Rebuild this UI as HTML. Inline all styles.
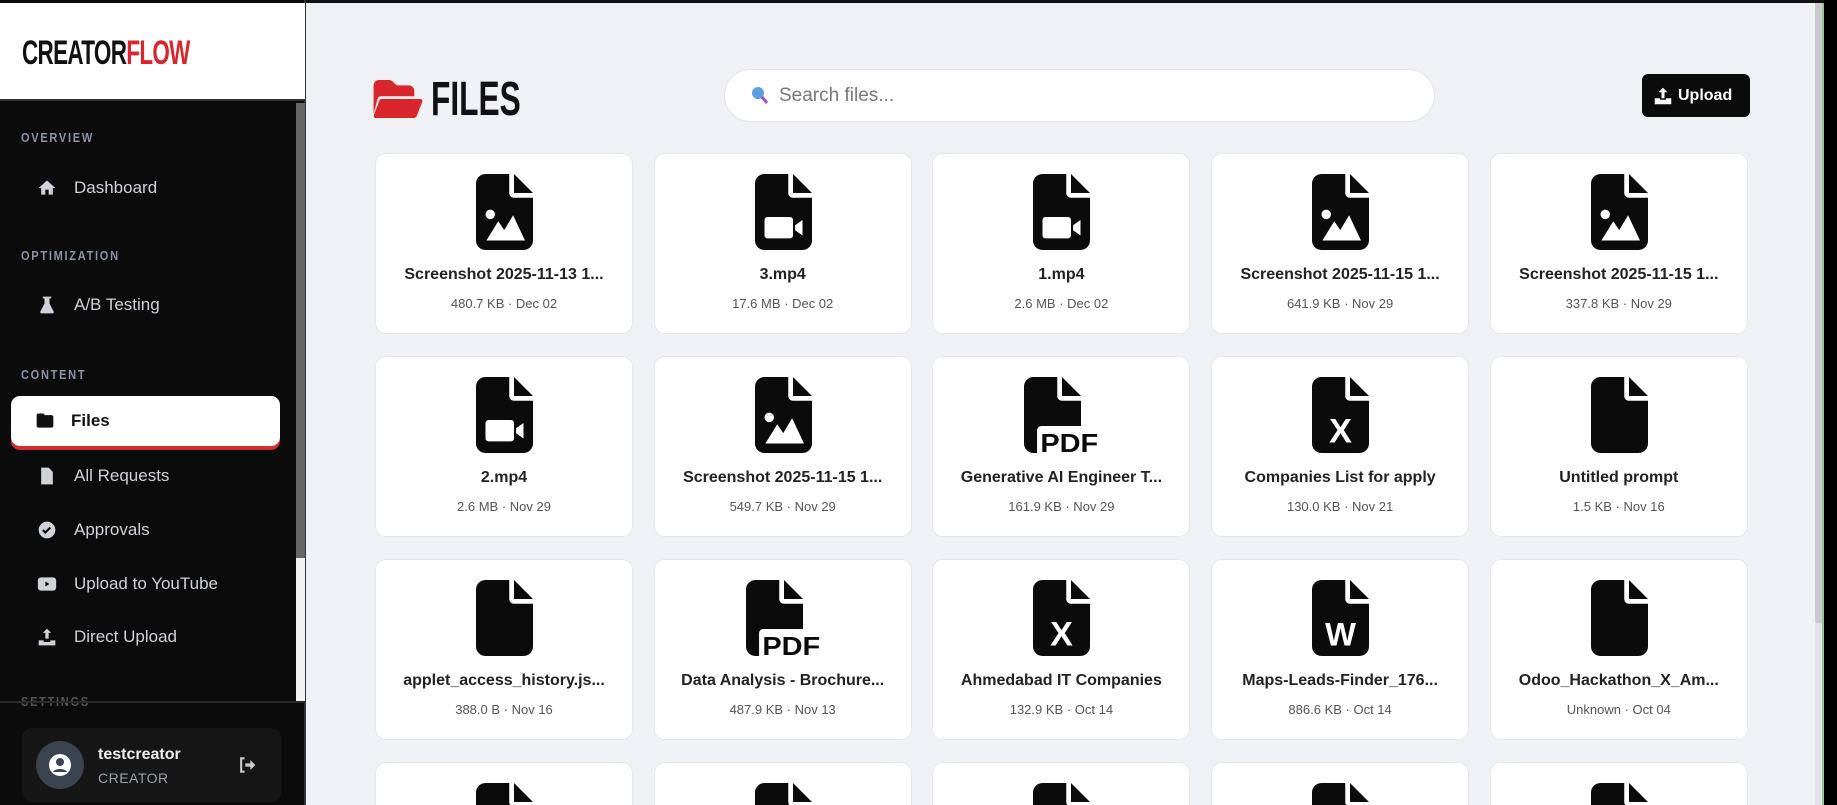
<!DOCTYPE html>
<html><head><meta charset="utf-8"><style>
*{margin:0;padding:0;box-sizing:border-box}
html,body{width:1837px;height:805px;overflow:hidden}
body{background:#f0f1f4;font-family:"Liberation Sans",sans-serif;position:relative}
#wrap{position:absolute;left:0;top:0;width:1837px;height:805px;overflow:hidden}
.topbar{position:absolute;left:0;top:0;width:1837px;height:3px;background:#111}
.side{position:absolute;left:0;top:0;width:306px;height:805px;background:#0b0b0b;border-right:2px solid #333;z-index:2}
.logo{position:absolute;left:0;top:3px;width:305px;height:98px;background:#fff;border-bottom:2px solid #333}
.logo span{position:absolute;left:22px;top:31px;font-weight:bold;font-size:34px;letter-spacing:-1px;transform:scaleX(.66);transform-origin:left;color:#111;font-family:"Liberation Sans Narrow","Liberation Sans",sans-serif;white-space:nowrap}
.logo b{color:#d9262c}
.sec{position:absolute;left:21px;font-size:13px;font-weight:bold;color:#8a93a8;letter-spacing:2px;transform:scaleX(.85);transform-origin:left}
.item{position:absolute;left:37px;font-size:17px;color:#cfd2d8;display:flex;align-items:center}
.item svg{width:20px;height:20px;margin-right:17px;fill:#cfd2d8}
.active{position:absolute;left:11px;top:396px;width:269px;height:50px;background:#fff;border-radius:9px;box-shadow:0 4px 0 #d32f2f;display:flex;align-items:center;padding-left:24px;font-weight:bold;font-size:17px;color:#111}
.active svg{width:20px;height:20px;fill:#111;margin-right:16px}
.sb{position:absolute;left:296px;top:103px;width:9px;height:598px;background:#f2f2f2}
.sb i{position:absolute;left:0;top:0;width:9px;height:455px;background:#666}
.div{position:absolute;left:0;top:701px;width:306px;height:2px;background:#2a2a2a}
.user{position:absolute;left:22px;top:728px;width:259px;height:74px;background:#161616;border-radius:10px}
.av{position:absolute;left:14px;top:13px;width:48px;height:48px;border-radius:50%;background:#3b4350}
.card{position:absolute;width:258px;height:181px;background:#fff;border-radius:11px;border:1px solid #e6e7ea;text-align:center;overflow:hidden}
.card.last{height:43px;border-bottom:none;border-radius:11px 11px 0 0}
.card svg.ic{position:absolute;top:20px;left:100px;width:57px;height:76px}
.card svg.pdf{left:91px;width:76px}
.nm{position:absolute;top:112px;left:0;width:100%;font-size:16px;font-weight:bold;color:#222}
.mt{position:absolute;top:142px;left:0;width:100%;font-size:13px;color:#555}
</style></head><body>
<svg width="0" height="0" style="position:absolute">
<defs>
<path id="doc" d="M0 64C0 28.7 28.7 0 64 0H224V128c0 17.7 14.3 32 32 32H384V448c0 35.3-28.7 64-64 64H64c-35.3 0-64-28.7-64-64V64zm384 64H256V0L384 128z"/>
</defs></svg>
<div id="wrap">
<div class="topbar"></div>
<div class="side">
<div class="logo"><span>CREATOR<b>FLOW</b></span></div>
<div class="sec" style="top:130px">OVERVIEW</div>
<div class="item" style="top:178px"><svg viewBox="0 0 24 24"><path d="M12 3L2 12h3v8h5v-6h4v6h5v-8h3z"/></svg>Dashboard</div>
<div class="sec" style="top:248px">OPTIMIZATION</div>
<div class="item" style="top:295px"><svg viewBox="0 0 24 24"><path d="M7 2h10v2h-2v6l5 10c.5 1-.2 2-1.3 2H5.3C4.2 22 3.5 21 4 20l5-10V4H7z"/></svg>A/B Testing</div>
<div class="sec" style="top:367px">CONTENT</div>
<div class="active"><svg viewBox="0 0 24 24"><path d="M2 5c0-1 1-2 2-2h6l2 2h8c1 0 2 1 2 2v11c0 1-1 2-2 2H4c-1 0-2-1-2-2z"/></svg>Files</div>
<div class="item" style="top:466px"><svg viewBox="0 0 24 24"><path d="M5 2h9l5 5v15H5zM8 13h8v2H8zm0 4h8v2H8z"/></svg>All Requests</div>
<div class="item" style="top:520px"><svg viewBox="0 0 24 24"><circle cx="12" cy="12" r="10"/><path d="M7 12l3 3 6-6" stroke="#0b0b0b" stroke-width="2.5" fill="none"/></svg>Approvals</div>
<div class="item" style="top:574px"><svg viewBox="0 0 24 24"><rect x="1" y="4" width="22" height="16" rx="4"/><path d="M10 9l5 3-5 3z" fill="#0b0b0b"/></svg>Upload to YouTube</div>
<div class="item" style="top:627px"><svg viewBox="0 0 24 24"><path d="M12 2l5 5h-3v7h-4V7H7zM2 16h6v2h8v-2h6v6H2z"/></svg>Direct Upload</div>
<div class="sec" style="top:694px;color:#555">SETTINGS</div>
<div class="sb"><i></i></div>
<div class="div"></div>
<div class="user"><div class="av"><svg viewBox="0 0 48 48" width="48" height="48"><circle cx="24" cy="24" r="11" fill="#fff"/><circle cx="24" cy="21" r="4" fill="#3b4350"/><path d="M17 31c2-4 12-4 14 0" fill="#3b4350"/></svg></div>
<div style="position:absolute;left:76px;top:18px;font-size:16px;font-weight:bold;color:#eee">testcreator</div>
<div style="position:absolute;left:76px;top:42px;font-size:14px;color:#9a9fa8;letter-spacing:.5px">CREATOR</div>
<svg style="position:absolute;left:215px;top:27px" width="20" height="20" viewBox="0 0 24 24"><path d="M9 4H5v16h4" stroke="#ccc" stroke-width="2.5" fill="none"/><path d="M10 10h6V6l6 6-6 6v-4h-6z" fill="#ccc"/></svg>
</div>
</div>

<svg style="position:absolute;left:373px;top:80px" width="50" height="38" viewBox="0 0 576 448"><path d="M88 192c-18 0-34 12-40 29L0 400V64C0 29 29 0 64 0h117c17 0 33 7 45 19l27 26c12 12 28 19 45 19h118c35 0 64 29 64 64v64z" fill="#d9262c"/><path d="M88 224h464c17 0 28 17 22 33l-64 166c-6 15-20 25-36 25H24c-17 0-28-17-22-33l64-166c4-15 12-25 22-25z" fill="#d9262c"/></svg>
<div style="position:absolute;left:431px;top:72px;font-size:48px;font-weight:bold;color:#111;transform:scaleX(.66);transform-origin:left;font-family:'Liberation Sans Narrow','Liberation Sans',sans-serif">FILES</div>
<div style="position:absolute;left:724px;top:69px;width:711px;height:53px;background:#fff;border-radius:27px;border:1px solid #e4e5e8"></div>
<svg style="position:absolute;left:751px;top:86px" width="18" height="20" viewBox="0 0 18 20"><circle cx="7" cy="7" r="6" fill="#5aa0e0"/><path d="M11 11l5 6" stroke="#a050c0" stroke-width="3"/></svg>
<div style="position:absolute;left:779px;top:85px;font-size:19px;color:#777">Search files...</div>
<div style="position:absolute;left:1642px;top:74px;width:108px;height:43px;background:#0b0b0b;border-radius:6px;color:#fff;font-weight:bold;font-size:16px;display:flex;align-items:center;padding-left:12px"><svg width="18" height="18" viewBox="0 0 24 24" style="margin-right:6px"><path d="M12 1l6 6h-4v8h-4V7H6zM1 15h7v2h8v-2h7v8H1z" fill="#fff"/></svg>Upload</div>

<div id="grid"></div>

<div style="position:absolute;left:1815px;top:3px;width:8px;height:802px;background:#e2e3e6"></div>
<div style="position:absolute;left:1815px;top:3px;width:8px;height:620px;background:#c9cacd"></div>
<div style="position:absolute;left:1822px;top:3px;width:2px;height:802px;background:#9bc39b"></div>
<div style="position:absolute;left:1824px;top:0;width:13px;height:805px;background:#000"></div>
</div>
<script>
const D='<use href="#doc" fill="#0b0b0b"/>';
const I={
img:D+'<circle cx="96" cy="272" r="32" fill="#fff"/><path d="M70 448l80-130 40 60 60-100 80 170z" fill="#fff"/>',
vid:D+'<rect x="64" y="290" width="192" height="144" rx="20" fill="#fff"/><path d="M270 345l50-35v104l-50-35z" fill="#fff"/>',
file:D,
xls:D+'<text x="192" y="440" text-anchor="middle" font-family="Liberation Sans" font-weight="bold" font-size="230" fill="#fff">X</text>',
doc:D+'<text x="192" y="440" text-anchor="middle" font-family="Liberation Sans" font-weight="bold" font-size="220" fill="#fff">W</text>'
};
const PDF='<path d="M0 64C0 28.7 28.7 0 64 0H224V128c0 17.7 14.3 32 32 32H384V330H120c-20 0-32 12-32 32V512H64c-35 0-64-28-64-64z" fill="#0b0b0b"/><path d="M384 128H256V0z" fill="#0b0b0b"/><text x="110" y="505" font-family="Liberation Sans" font-weight="bold" font-size="175" fill="#0b0b0b" textLength="390" lengthAdjust="spacingAndGlyphs">PDF</text>';
const data=[
['img','Screenshot 2025-11-13 1...','480.7 KB · Dec 02'],
['vid','3.mp4','17.6 MB · Dec 02'],
['vid','1.mp4','2.6 MB · Dec 02'],
['img','Screenshot 2025-11-15 1...','641.9 KB · Nov 29'],
['img','Screenshot 2025-11-15 1...','337.8 KB · Nov 29'],
['vid','2.mp4','2.6 MB · Nov 29'],
['img','Screenshot 2025-11-15 1...','549.7 KB · Nov 29'],
['pdf','Generative AI Engineer T...','161.9 KB · Nov 29'],
['xls','Companies List for apply','130.0 KB · Nov 21'],
['file','Untitled prompt','1.5 KB · Nov 16'],
['file','applet_access_history.js...','388.0 B · Nov 16'],
['pdf','Data Analysis - Brochure...','487.9 KB · Nov 13'],
['xls','Ahmedabad IT Companies','132.9 KB · Oct 14'],
['doc','Maps-Leads-Finder_176...','886.6 KB · Oct 14'],
['file','Odoo_Hackathon_X_Am...','Unknown · Oct 04'],
['file','',''],['file','',''],['file','',''],['file','',''],['file','','']];
let h='';
data.forEach((d,i)=>{const c=i%5,r=Math.floor(i/5);
const x=375+c*278.7,y=153+r*203;
const svg=d[0]=='pdf'?'<svg class="ic pdf" viewBox="0 0 512 512">'+PDF+'</svg>':'<svg class="ic" viewBox="0 0 384 512">'+I[d[0]]+'</svg>';
const inner=r==3?svg:svg+'<div class="nm">'+d[1]+'</div><div class="mt">'+d[2]+'</div>';
h+='<div class="card'+(r==3?' last':'')+'" style="left:'+x+'px;top:'+y+'px">'+inner+'</div>';});
document.getElementById('grid').innerHTML=h;
</script>
</body></html>
